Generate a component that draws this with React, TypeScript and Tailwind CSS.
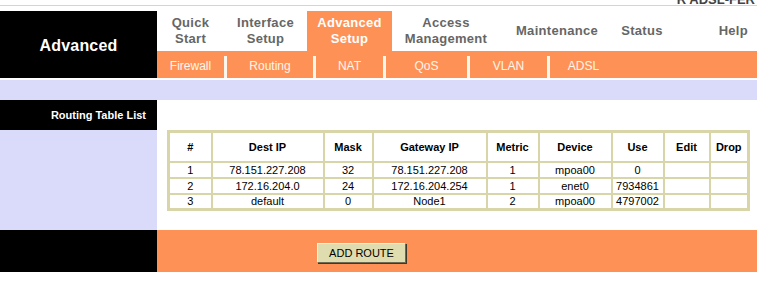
import React from 'react';

const TOP_NAV = [
  { label: ['Quick', 'Start'], w: 'w-[67px]' },
  { label: ['Interface', 'Setup'], w: 'w-[83px]' },
  { label: ['Advanced', 'Setup'], w: 'w-[85px]', active: true },
  { label: ['Access', 'Management'], w: 'w-[108px]' },
  { label: ['Maintenance'], w: 'w-[114px]' },
  { label: ['Status'], w: 'w-[56px]' },
];

const SUB_NAV = [
  { label: 'Firewall', w: 'w-[67px]' },
  { label: 'Routing', w: 'w-[86px]' },
  { label: 'NAT', w: 'w-[67px]' },
  { label: 'QoS', w: 'w-[81px]' },
  { label: 'VLAN', w: 'w-[77px]' },
  { label: 'ADSL', w: 'w-[67px]' },
];

const COLS = [
  { name: '#', w: 43 },
  { name: 'Dest IP', w: 112 },
  { name: 'Mask', w: 49 },
  { name: 'Gateway IP', w: 114 },
  { name: 'Metric', w: 52 },
  { name: 'Device', w: 73 },
  { name: 'Use', w: 52 },
  { name: 'Edit', w: 46 },
  { name: 'Drop', w: 39 },
];

const ROUTES = [
  ['1', '78.151.227.208', '32', '78.151.227.208', '1', 'mpoa00', '0', '', ''],
  ['2', '172.16.204.0', '24', '172.16.204.254', '1', 'enet0', '7934861', '', ''],
  ['3', 'default', '0', 'Node1', '2', 'mpoa00', '4797002', '', ''],
];

export default function App() {
  return (
    <div className="w-[777px] h-[302px] bg-white font-['Liberation_Sans',Arial,sans-serif]">
      <div className="w-[757px]">
        {/* product name strip, cut at the top */}
        <div className="h-[5px] overflow-hidden flex justify-end items-end pr-[2px]">
          <span className="text-[13px] font-bold leading-[13px] text-[#444] -mb-[1px]">R ADSL-FER</span>
        </div>
        <div className="h-px bg-[#d9d6bb]" />
        <div className="h-[5px]" />

        {/* header */}
        <div className="flex h-[67px]">
          <div className="w-[157px] bg-black flex items-center justify-center pt-[2px]">
            <span className="text-white text-[16px] font-bold tracking-[0.2px]">Advanced</span>
          </div>
          <div className="flex-1 flex flex-col">
            <div className="h-[40px] flex">
              {TOP_NAV.map((n) => (
                <div
                  key={n.label.join(' ')}
                  className={`${n.w} flex flex-col items-center justify-center text-[13px] font-bold leading-[16px] tracking-[0.3px] ${
                    n.active ? 'bg-[#fe9256] text-white' : 'text-[#666666]'
                  }`}
                >
                  {n.label.map((l) => (
                    <span key={l}>{l}</span>
                  ))}
                </div>
              ))}
              <div className="flex-1 flex items-center justify-end pr-[9px] text-[13px] font-bold tracking-[0.3px] text-[#666666]">
                Help
              </div>
            </div>
            <div className="h-[27px] bg-[#fe9256] flex">
              {SUB_NAV.map((s, i) => (
                <React.Fragment key={s.label}>
                  {i > 0 && <div className="w-[3px] mt-[5px] bg-[#fdf6ea]" />}
                  <div className={`${s.w} flex items-center justify-center pt-[3px] text-[12px] text-[#fff6ea]`}>
                    {s.label}
                  </div>
                </React.Fragment>
              ))}
            </div>
          </div>
        </div>

        <div className="h-[2px]" />
        <div className="h-[20px] bg-[#dadafa]" />

        {/* content */}
        <div className="flex">
          <div className="w-[157px] flex flex-col">
            <div className="h-[30px] bg-black flex items-center justify-end pr-[11px]">
              <span className="text-white text-[11px] font-bold">Routing Table List</span>
            </div>
            <div className="flex-1 bg-[#dadafa]" />
          </div>
          <div className="flex-1 pt-[30px] pl-[10px] pb-[19px]">
            <table className="w-[580px] table-fixed border-collapse border-[3px] border-[#d8d5a8] text-[11px] text-black">
              <colgroup>
                {COLS.map((c) => (
                  <col key={c.name} style={{ width: c.w }} />
                ))}
              </colgroup>
              <thead>
                <tr className="h-[30px]">
                  {COLS.map((c) => (
                    <th key={c.name} className="border-2 border-[#d8d5a8] font-bold text-center">
                      {c.name}
                    </th>
                  ))}
                </tr>
              </thead>
              <tbody>
                {ROUTES.map((r) => (
                  <tr key={r[0]} className="h-[16px]">
                    {r.map((v, i) => (
                      <td key={i} className="border-2 border-[#d8d5a8] text-center leading-[12px] p-0">
                        {v}
                      </td>
                    ))}
                  </tr>
                ))}
              </tbody>
            </table>
          </div>
        </div>

        {/* footer */}
        <div className="flex h-[42px]">
          <div className="w-[157px] bg-black" />
          <div className="flex-1 bg-[#fe9256] pl-[160px] pt-[10px]">
            <button className="w-[89px] h-[20px] bg-[#dfdcaf] text-[11px] text-black border border-t-[#f4f2dc] border-l-[#f4f2dc] border-r-[#6b6a55] border-b-[#6b6a55] shadow-[1px_1px_0_#3a3a30]">
              ADD ROUTE
            </button>
          </div>
        </div>
      </div>
    </div>
  );
}
